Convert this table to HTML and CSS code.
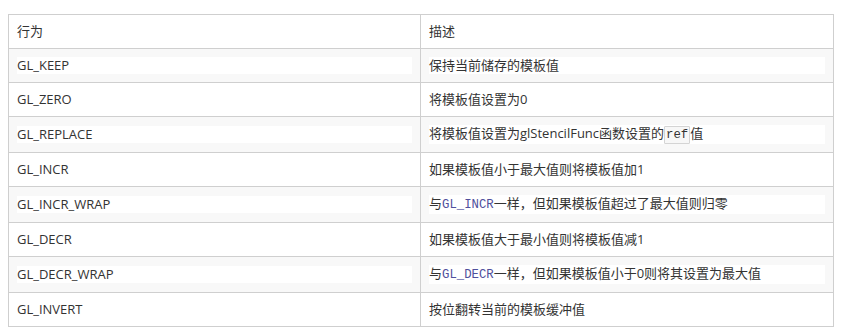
FILE: index.html
```html
<!DOCTYPE html>
<html lang="zh">
<head>
<meta charset="utf-8">
<link rel="stylesheet" href="styles.css">
</head>
<body>
<table class="ops">
  <thead>
    <tr><th><p>行为</p></th><th><p>描述</p></th></tr>
  </thead>
  <tbody>
    <tr><td><p>GL_KEEP</p></td><td><p>保持当前储存的模板值</p></td></tr>
    <tr><td><p>GL_ZERO</p></td><td><p>将模板值设置为0</p></td></tr>
    <tr><td><p>GL_REPLACE</p></td><td><p>将模板值设置为glStencilFunc函数设置的<code class="boxed">ref</code>值</p></td></tr>
    <tr><td><p>GL_INCR</p></td><td><p>如果模板值小于最大值则将模板值加1</p></td></tr>
    <tr><td><p>GL_INCR_WRAP</p></td><td><p>与<code>GL_INCR</code>一样，但如果模板值超过了最大值则归零</p></td></tr>
    <tr><td><p>GL_DECR</p></td><td><p>如果模板值大于最小值则将模板值减1</p></td></tr>
    <tr><td><p>GL_DECR_WRAP</p></td><td><p>与<code>GL_DECR</code>一样，但如果模板值小于0则将其设置为最大值</p></td></tr>
    <tr><td><p>GL_INVERT</p></td><td><p>按位翻转当前的模板缓冲值</p></td></tr>
  </tbody>
</table>
</body>
</html>
```

FILE: styles.css
```css
body {
  margin: 14px 8px 8px 8px;
  background: #ffffff;
  font-family: "Open Sans", "Noto Sans CJK SC", sans-serif;
  font-size: 13px;
  color: #333333;
}

.ops {
  width: 826px;
  border-collapse: collapse;
  table-layout: fixed;
}

.ops th,
.ops td {
  border: 1px solid #cfcfcf;
  padding: 8px;
  text-align: left;
  font-weight: normal;
  vertical-align: middle;
}

.ops th:first-child,
.ops td:first-child {
  width: 395px;
}

.ops p {
  margin: 0;
  line-height: 17px;
  background: #ffffff;
  white-space: nowrap;
}

.ops tbody tr:nth-child(odd) td {
  background: #f8f8f8;
}

.ops code {
  font-family: "Liberation Mono", "DejaVu Sans Mono", monospace;
  font-size: 12.3px;
  color: #4f4f9c;
}

.ops code.boxed {
  color: #333333;
  border: 1px solid #d4d4d4;
  background: #f7f7f7;
  padding: 1px 1px;
  border-radius: 1px;
}
```
